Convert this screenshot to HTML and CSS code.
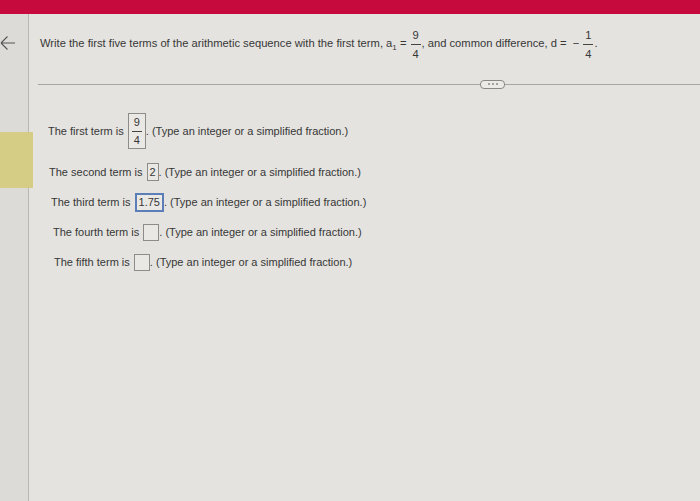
FILE: index.html
```html
<!DOCTYPE html>
<html>
<head>
<meta charset="utf-8">
<link rel="stylesheet" href="styles.css">
</head>
<body>
<div class="topbar"></div>
<div class="main">
  <aside class="sidebar">
    <svg class="back" width="16" height="16" viewBox="0 0 16 16">
      <path d="M1 8 H15 M1 8 L7.5 1.5 M1 8 L7.5 14.5" fill="none" stroke="#555" stroke-width="1.1"/>
    </svg>
    <div class="highlight"></div>
  </aside>
  <section class="content">
    <p class="question">Write the first five terms of the arithmetic sequence with the first term, a<sub class="sub">1</sub> = <span class="frac"><span class="num">9</span><span class="bar"></span><span class="den">4</span></span>, and common difference, d = &nbsp;&minus;&nbsp;<span class="frac"><span class="num">1</span><span class="bar"></span><span class="den">4</span></span>.</p>
    <div class="divider">
      <div class="line first"></div>
      <div class="pill"><span class="dot"></span><span class="dot"></span><span class="dot"></span></div>
      <div class="line"></div>
    </div>
    <div class="terms">
      <div class="row tall">The first term is <span class="box fracbox"><span class="frac"><span class="num">9</span><span class="bar"></span><span class="den">4</span></span></span>. (Type an integer or a simplified fraction.)</div>
      <div class="row r2">The second term is <span class="box">2</span>. (Type an integer or a simplified fraction.)</div>
      <div class="row r3">The third term is <span class="box focus">1.75</span>. (Type an integer or a simplified fraction.)</div>
      <div class="row r4">The fourth term is <span class="box empty"></span>. (Type an integer or a simplified fraction.)</div>
      <div class="row r5">The fifth term is <span class="box empty"></span>. (Type an integer or a simplified fraction.)</div>
    </div>
  </section>
</div>
</body>
</html>
```
FILE: styles.css
```css
html, body {
  margin: 0;
  padding: 0;
}
body {
  width: 700px;
  height: 501px;
  overflow: hidden;
  background: #e4e3df;
  font-family: "Liberation Sans", Arial, sans-serif;
  font-size: 11px;
  color: #373737;
}
.topbar {
  height: 14px;
  background: #c60a3e;
}
.main {
  display: flex;
  height: 487px;
}
.sidebar {
  width: 28px;
  flex: 0 0 28px;
  background: #dcdbd7;
  border-right: 1px solid #b8b7b3;
  display: flex;
  flex-direction: column;
}
.back {
  margin-top: 21px;
  margin-left: 0;
}
.highlight {
  margin-top: 81px;
  height: 56px;
  width: 33px;
  background: #d5cd86;
}
.content {
  flex: 1;
  padding-left: 11px;
  display: flex;
  flex-direction: column;
}
.question {
  margin: 15px 0 0 0;
  line-height: 29px;
  white-space: nowrap;
  font-size: 11.2px;
}
.sub {
  font-size: 8px;
  vertical-align: -3px;
  line-height: 0;
}
.frac {
  display: inline-flex;
  flex-direction: column;
  align-items: center;
  vertical-align: middle;
  line-height: 12px;
  min-width: 10px;
  padding: 0 1px;
}
.bar {
  display: block;
  align-self: stretch;
  height: 1px;
  background: #444;
  margin: 3px 0 3px 0;
}
.divider {
  display: flex;
  align-items: center;
  margin-top: 19px;
  margin-left: -2px;
  height: 10px;
}
.line {
  flex: 1;
  height: 1px;
  background: #a6a5a2;
}
.line.first {
  flex: 0 0 442px;
}
.pill {
  width: 23px;
  height: 7px;
  border: 1px solid #8a8986;
  border-radius: 4px;
  background: #ebeae6;
  display: flex;
  align-items: center;
  justify-content: center;
  gap: 2px;
}
.dot {
  width: 2px;
  height: 2px;
  border-radius: 1px;
  background: #8a8986;
}
.terms {
  display: flex;
  flex-direction: column;
  gap: 12px;
  margin-top: 24px;
  padding-left: 8px;
}
.row {
  display: flex;
  align-items: center;
  height: 18px;
  white-space: pre;
}
.row.tall {
  height: 36px;
  margin-bottom: 2px;
}
.r2 { padding-left: 1px; }
.r3 { padding-left: 3px; }
.r4 { padding-left: 5px; }
.r5 { padding-left: 6px; }
.box {
  display: inline-flex;
  align-items: center;
  justify-content: center;
  box-sizing: border-box;
  height: 18px;
  min-width: 12px;
  padding: 0 1px;
  border: 1px solid #8d8c89;
  background: #e9e8e4;
  margin-left: 1px;
}
.fracbox {
  height: 36px;
  width: 18px;
}
.fracbox .frac {
  line-height: 11px;
}
.focus {
  border: 2px solid #5b7db8;
  padding: 0 2px;
  height: 19px;
}
.empty {
  width: 16px;
  height: 17px;
}
```
